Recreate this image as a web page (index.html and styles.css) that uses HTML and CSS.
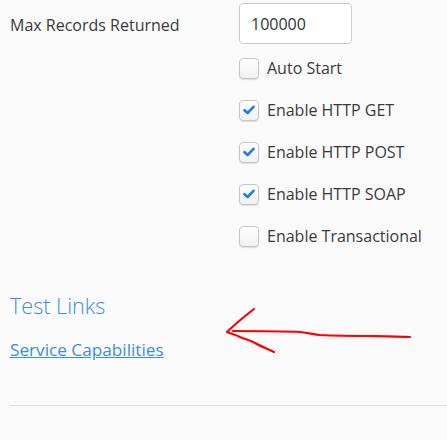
FILE: index.html
```html
<!DOCTYPE html>
<html>
<head>
<meta charset="utf-8">
<link rel="stylesheet" href="styles.css">
</head>
<body>
<div class="page">
  <div class="form-row">
    <div class="field-label">Max Records Returned</div>
    <div class="controls">
      <div class="text-input">100000</div>
      <div class="checks">
        <div class="check-row"><span class="box"></span><span class="check-text">Auto Start</span></div>
        <div class="check-row"><span class="box"><svg class="tick" viewBox="0 0 12 10" width="12" height="10"><path d="M1.5 5.2 L4.6 8 L10.5 1.8" fill="none" stroke="#1f7fe6" stroke-width="2.6" stroke-linecap="round" stroke-linejoin="round"/></svg></span><span class="check-text">Enable HTTP GET</span></div>
        <div class="check-row"><span class="box"><svg class="tick" viewBox="0 0 12 10" width="12" height="10"><path d="M1.5 5.2 L4.6 8 L10.5 1.8" fill="none" stroke="#1f7fe6" stroke-width="2.6" stroke-linecap="round" stroke-linejoin="round"/></svg></span><span class="check-text">Enable HTTP POST</span></div>
        <div class="check-row"><span class="box"><svg class="tick" viewBox="0 0 12 10" width="12" height="10"><path d="M1.5 5.2 L4.6 8 L10.5 1.8" fill="none" stroke="#1f7fe6" stroke-width="2.6" stroke-linecap="round" stroke-linejoin="round"/></svg></span><span class="check-text">Enable HTTP SOAP</span></div>
        <div class="check-row"><span class="box"></span><span class="check-text">Enable Transactional</span></div>
      </div>
    </div>
  </div>
  <h2 class="section-title">Test Links</h2>
  <div class="link-line"><a class="link" href="#">Service Capabilities</a></div>
  <div class="divider"></div>
</div>
<svg class="annotation" width="447" height="440" viewBox="0 0 447 440">
  <path d="M254 309 C245 316 234 325 227 332 C232 334 236 335 240 337 C245 339 249 340 253 342 C260 346 268 349 274 352" fill="none" stroke="#ff0000" stroke-width="2.2" stroke-linecap="round" stroke-linejoin="round"/>
  <path d="M233 331 C255 331 280 331 300 332 C308 333 313 334 320 335 C340 336 355 336 370 336 C385 336.5 398 337 410 337" fill="none" stroke="#ff0000" stroke-width="2.2" stroke-linecap="round"/>
</svg>
</body>
</html>
```

FILE: styles.css
```css
html, body {
  margin: 0;
  padding: 0;
  background: #fafafa;
}
body {
  font-family: "Open Sans", "Noto Sans", sans-serif;
  color: #333333;
  font-size: 16px;
  width: 447px;
  height: 440px;
  overflow: hidden;
  position: relative;
}
.page {
  padding: 3px 0 0 10px;
}
.form-row {
  display: grid;
  grid-template-columns: 229px 1fr;
}
.field-label {
  box-sizing: border-box;
  height: 41px;
  padding-top: 2px;
  line-height: 41px;
  color: #3a3a3a;
}
.text-input {
  box-sizing: border-box;
  width: 113px;
  height: 41px;
  border: 1px solid #cccccc;
  border-radius: 4px;
  background: #ffffff;
  padding: 1px 0 0 11px;
  line-height: 39px;
  color: #333333;
}
.checks {
  display: flex;
  flex-direction: column;
  margin-top: 3px;
}
.check-row {
  height: 42px;
  display: flex;
  align-items: center;
  gap: 8px;
}
.box {
  box-sizing: border-box;
  width: 20px;
  height: 21px;
  border: 1px solid #c6c6c6;
  border-radius: 4px;
  background: linear-gradient(#ffffff, #f1f1f1);
  box-shadow: 0 1px 1px rgba(0, 0, 0, 0.12);
  display: flex;
  align-items: center;
  justify-content: center;
}
.tick {
  display: block;
}
.check-text {
  color: #3a3a3a;
}
.section-title {
  margin: 36px 0 0 0;
  font-size: 21.6px;
  font-weight: 300;
  line-height: 26px;
  color: #3b8ee0;
}
.link-line {
  margin-top: 20px;
  height: 22px;
  line-height: 22px;
}
.link {
  font-size: 17.2px;
  color: #3b8ee0;
  text-decoration: underline;
}
.divider {
  margin-top: 44px;
  height: 1px;
  background: #dcdcdc;
}
.annotation {
  position: absolute;
  left: 0;
  top: 0;
  pointer-events: none;
}
```
